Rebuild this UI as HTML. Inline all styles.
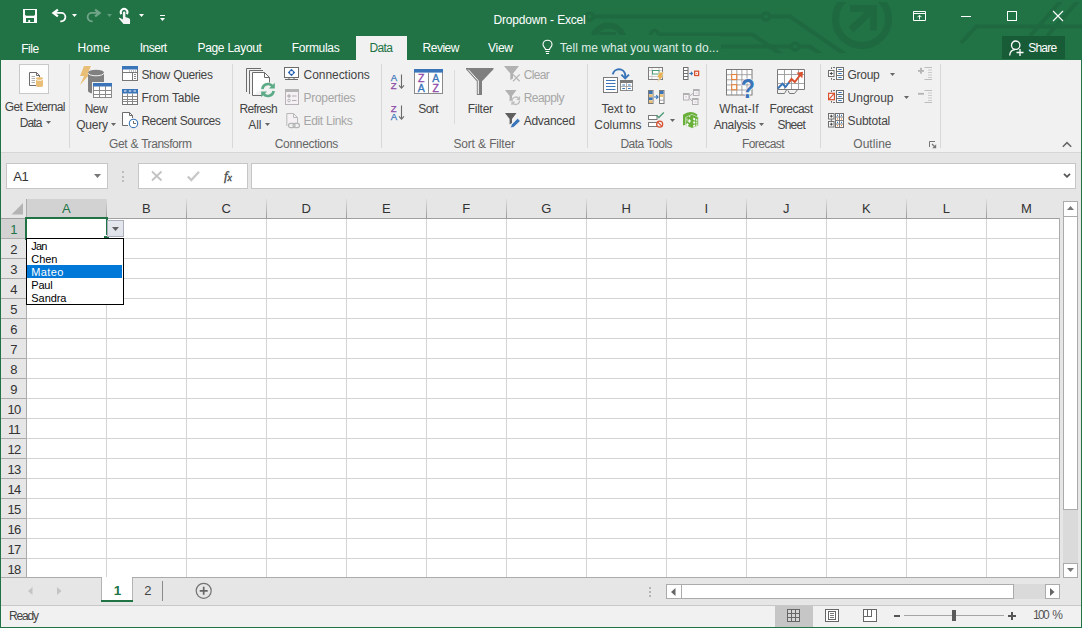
<!DOCTYPE html>
<html><head><meta charset="utf-8"><title>Dropdown - Excel</title>
<style>
*{box-sizing:border-box;margin:0;padding:0}
html,body{width:1082px;height:628px;overflow:hidden;background:#fff}
body{font-family:"Liberation Sans",sans-serif;font-size:12px;color:#444;position:relative}
.a,.t{position:absolute}
.t{white-space:nowrap}
svg{overflow:visible}
</style></head><body>
<div class="a" style="left:0px;top:0px;width:1082px;height:60px;background:#217346;"></div>
<svg class="a" style="left:0;top:2px;overflow:hidden" width="1082" height="51" viewBox="0 2 1082 51"><g fill="none" stroke="#1e693f" stroke-width="4">
<circle cx="589.5" cy="16.5" r="3.6" stroke-width="3.500"/><path d="M593.500 16.5H762"/><circle cx="766" cy="16.5" r="3.6" stroke-width="3.500"/><path d="M770 16.5H790L846 55"/>
<path d="M721 46.5H791"/><circle cx="795" cy="46.5" r="3.6" stroke-width="3.500"/><path d="M799 46.5H810L822 55"/>
<path d="M961 43L976.500 26.500H1082"/>
<path d="M1061 1L1030 36"/><path d="M1078 1L1047 36"/>
<circle cx="862" cy="19" r="26.500" stroke-width="7"/>
<path d="M850 8.500H873.500V30.500M873 9L851 30" stroke-width="7"/>
</g>
<g fill="none" stroke="#1e693f" stroke-width="4">
<path d="M658 34.500H752.500L783 55.500"/>
</g></svg>
<svg class="a" style="left:0;top:2px;overflow:hidden" width="1082" height="33" viewBox="0 2 1082 33"><g fill="none" stroke="#1e693f"><circle cx="654.5" cy="34" r="3.6" stroke-width="3.500"/>
<circle cx="608.400" cy="41" r="15.600" stroke-width="6"/><path d="M599 33.500H616" stroke-width="3"/></g></svg>
<div class="a" style="left:0px;top:60px;width:1px;height:568px;background:#217346;"></div>
<div class="a" style="left:1081px;top:60px;width:1px;height:568px;background:#217346;"></div>
<div class="a" style="left:0px;top:627px;width:1082px;height:1px;background:#217346;"></div>
<div class="t" style="left:493.60px;top:13px;font-size:12px;line-height:14px;letter-spacing:-0.200px;color:#fff;word-spacing:0.200px;">Dropdown - Excel</div>
<svg class="a" style="left:23px;top:9px" width="14" height="14" viewBox="0 0 14 14"><path fill-rule="evenodd" d="M0 0H14V14H0Z M2 1.100H12V5.700L11 6.700H3L2 5.700Z M3 9H11V12.900H3Z" fill="#fff"/><rect x="5.300" y="11" width="1.800" height="2" fill="#fff"/></svg>
<svg class="a" style="left:52px;top:8px" width="14" height="15" viewBox="0 0 14 15"><path d="M5.900 1.700L1.500 5L5.900 8.300" fill="none" stroke="#fff" stroke-width="2.300"/><path d="M2.500 4.900H9.200A4.200 4.200 0 0 1 9.200 13.300H8.300" fill="none" stroke="#fff" stroke-width="1.800"/></svg>
<svg class="a" style="left:72px;top:14px" width="5" height="3" viewBox="0 0 5 3"><path d="M0 0H5L2.500 3Z" fill="#fff"/></svg>
<svg class="a" style="left:87px;top:8px" width="14" height="15" viewBox="0 0 14 15"><g opacity=".36"><path d="M8.100 1.700L12.500 5L8.100 8.300" fill="none" stroke="#fff" stroke-width="2.300"/><path d="M11.500 4.900H4.800A4.200 4.200 0 0 0 4.800 13.300H5.700" fill="none" stroke="#fff" stroke-width="1.800"/></g></svg>
<svg class="a" style="left:107px;top:14px" width="5" height="3" viewBox="0 0 5 3"><path d="M0 0H5L2.500 3Z" fill="#5d9a79"/></svg>
<svg class="a" style="left:118px;top:7px" width="13" height="18" viewBox="0 0 13 18"><path d="M3.400 7.100A3.300 3.300 0 1 1 8.800 7.100" fill="none" stroke="#fff" stroke-width="2"/><path d="M4.900 5.700a1.250 1.250 0 0 1 2.500 0V10l3.600 1.300q1.200 .5 1.100 1.700L12 17H5.500L.9 11.500q-.2-.9 .8-.8L4.900 12.600Z" fill="#f4f4f4"/></svg>
<svg class="a" style="left:139px;top:14px" width="5" height="3" viewBox="0 0 5 3"><path d="M0 0H5L2.500 3Z" fill="#fff"/></svg>
<svg class="a" style="left:160px;top:15px" width="5" height="6" viewBox="0 0 5 6"><path d="M0 0.500H5" stroke="#fff" stroke-width="1"/><path d="M0 3H5L2.500 6Z" fill="#fff"/></svg>
<svg class="a" style="left:913px;top:11px" width="13" height="10" viewBox="0 0 13 10"><path d="M0.500 0.500H12.500V9.500H0.500Z M0.500 2.500H12.500" fill="none" stroke="#fff"/><path d="M6.500 8.500V4.500M4.500 6.200L6.500 4.200L8.500 6.200" fill="none" stroke="#fff"/></svg>
<div class="a" style="left:961px;top:16px;width:10px;height:1px;background:#fff;"></div>
<div class="a" style="left:1007px;top:11px;width:10px;height:10px;background:transparent;border:1px solid #fff"></div>
<svg class="a" style="left:1053px;top:11px" width="10" height="10" viewBox="0 0 10 10"><path d="M0 0L10 10M10 0L0 10" stroke="#fff" stroke-width="1.100"/></svg>
<div class="a" style="left:0px;top:36px;width:721px;height:24px;background:#217346;"></div>
<div class="a" style="left:356px;top:36px;width:51px;height:24px;background:#f1f1f1;"></div>
<div class="t" style="left:21.30px;top:42px;font-size:12px;line-height:14px;letter-spacing:-0.517px;color:#fff;">File</div>
<div class="t" style="left:77.40px;top:41px;font-size:12px;line-height:14px;letter-spacing:0.133px;color:#fff;">Home</div>
<div class="t" style="left:139.80px;top:41px;font-size:12px;line-height:14px;letter-spacing:-0.520px;color:#fff;">Insert</div>
<div class="t" style="left:197.50px;top:41px;font-size:12px;line-height:14px;letter-spacing:-0.333px;color:#fff;word-spacing:0.333px;">Page Layout</div>
<div class="t" style="left:291.80px;top:41px;font-size:12px;line-height:14px;letter-spacing:-0.300px;color:#fff;">Formulas</div>
<div class="t" style="left:422.50px;top:41px;font-size:12px;line-height:14px;letter-spacing:-0.480px;color:#fff;">Review</div>
<div class="t" style="left:488.00px;top:41px;font-size:12px;line-height:14px;letter-spacing:-0.283px;color:#fff;">View</div>
<div class="t" style="left:369.40px;top:41px;font-size:12px;line-height:14px;letter-spacing:-0.633px;color:#217346;">Data</div>
<div class="t" style="left:559.70px;top:41px;font-size:12px;line-height:14px;letter-spacing:0.043px;color:#dfece5;word-spacing:-0.043px;">Tell me what you want to do...</div>
<svg class="a" style="left:542px;top:40px" width="11" height="14" viewBox="0 0 11 14"><path d="M3.500 9.500C3.500 8 1 7 1 4.500a4.500 4.300 0 0 1 9 0C10 7 7.500 8 7.500 9.500Z" fill="none" stroke="#fff" stroke-width="1.100"/><path d="M3.500 11.500H7.500M4 13.500H7" stroke="#fff" stroke-width="1.100"/></svg>
<div class="a" style="left:1002px;top:36px;width:63px;height:23px;background:#185c37;"></div>
<div class="t" style="left:1028.30px;top:41px;font-size:12px;line-height:14px;letter-spacing:-0.800px;color:#fff;">Share</div>
<svg class="a" style="left:1009px;top:40px" width="15" height="16" viewBox="0 0 15 16"><circle cx="6.700" cy="5.200" r="4.200" fill="none" stroke="#fff" stroke-width="1.300"/><path d="M0.700 15.500C1 11.500 3.500 9.800 6 9.600" fill="none" stroke="#fff" stroke-width="1.300"/><path d="M7.500 12.500H14.500M11 9V16" stroke="#fff" stroke-width="1.300"/></svg>
<div class="a" style="left:1px;top:60px;width:1080px;height:92px;background:#f1f1f1;"></div>
<div class="a" style="left:1px;top:152px;width:1080px;height:1px;background:#d6d6d6;"></div>
<div class="a" style="left:1px;top:153px;width:1080px;height:46px;background:#e6e6e6;"></div>
<div class="a" style="left:69px;top:64px;width:1px;height:84px;background:#d8d8d8;"></div>
<div class="a" style="left:232px;top:64px;width:1px;height:84px;background:#d8d8d8;"></div>
<div class="a" style="left:381px;top:64px;width:1px;height:84px;background:#d8d8d8;"></div>
<div class="a" style="left:587px;top:64px;width:1px;height:84px;background:#d8d8d8;"></div>
<div class="a" style="left:706px;top:64px;width:1px;height:84px;background:#d8d8d8;"></div>
<div class="a" style="left:820px;top:64px;width:1px;height:84px;background:#d8d8d8;"></div>
<div class="a" style="left:940px;top:64px;width:1px;height:84px;background:#d8d8d8;"></div>
<div class="a" style="left:454px;top:70px;width:1px;height:54px;background:#dcdcdc;"></div>
<div class="t" style="left:109.10px;top:137px;font-size:12px;line-height:14px;letter-spacing:-0.437px;color:#666;word-spacing:0.437px;">Get &amp; Transform</div>
<div class="t" style="left:274.70px;top:137px;font-size:12px;line-height:14px;letter-spacing:-0.310px;color:#666;">Connections</div>
<div class="t" style="left:453.40px;top:137px;font-size:12px;line-height:14px;letter-spacing:-0.175px;color:#666;word-spacing:0.175px;">Sort &amp; Filter</div>
<div class="t" style="left:620.50px;top:137px;font-size:12px;line-height:14px;letter-spacing:-0.550px;color:#666;word-spacing:0.550px;">Data Tools</div>
<div class="t" style="left:742.00px;top:137px;font-size:12px;line-height:14px;letter-spacing:-0.586px;color:#666;">Forecast</div>
<div class="t" style="left:853.30px;top:137px;font-size:12px;line-height:14px;letter-spacing:0.033px;color:#666;">Outline</div>
<div class="t" style="left:4.70px;top:100px;font-size:12px;line-height:14px;letter-spacing:-0.590px;color:#444;word-spacing:0.590px;">Get External</div>
<div class="t" style="left:19.80px;top:116px;font-size:12px;line-height:14px;letter-spacing:-0.900px;color:#444;">Data</div>
<div class="t" style="left:84.70px;top:102px;font-size:12px;line-height:14px;letter-spacing:-0.525px;color:#444;">New</div>
<div class="t" style="left:76.20px;top:118px;font-size:12px;line-height:14px;letter-spacing:-0.225px;color:#444;">Query</div>
<div class="t" style="left:239.50px;top:102px;font-size:12px;line-height:14px;letter-spacing:-0.650px;color:#444;">Refresh</div>
<div class="t" style="left:248.30px;top:118px;font-size:12px;line-height:14px;letter-spacing:-0.075px;color:#444;">All</div>
<div class="t" style="left:418.20px;top:102px;font-size:12px;line-height:14px;letter-spacing:-0.533px;color:#444;">Sort</div>
<div class="t" style="left:467.80px;top:102px;font-size:12px;line-height:14px;letter-spacing:-0.290px;color:#444;">Filter</div>
<div class="t" style="left:601.60px;top:102px;font-size:12px;line-height:14px;letter-spacing:-0.270px;color:#444;word-spacing:0.270px;">Text to</div>
<div class="t" style="left:594.30px;top:118px;font-size:12px;line-height:14px;letter-spacing:-0.008px;color:#444;">Columns</div>
<div class="t" style="left:719.20px;top:102px;font-size:12px;line-height:14px;letter-spacing:0.125px;color:#444;">What-If</div>
<div class="t" style="left:713.70px;top:118px;font-size:12px;line-height:14px;letter-spacing:-0.371px;color:#444;">Analysis</div>
<div class="t" style="left:769.60px;top:102px;font-size:12px;line-height:14px;letter-spacing:-0.471px;color:#444;">Forecast</div>
<div class="t" style="left:777.50px;top:118px;font-size:12px;line-height:14px;letter-spacing:-0.787px;color:#444;">Sheet</div>
<div class="t" style="left:141.40px;top:68px;font-size:12px;line-height:14px;letter-spacing:-0.385px;color:#444;word-spacing:0.385px;">Show Queries</div>
<div class="t" style="left:141.40px;top:91px;font-size:12px;line-height:14px;letter-spacing:-0.150px;color:#444;word-spacing:0.150px;">From Table</div>
<div class="t" style="left:141.40px;top:114px;font-size:12px;line-height:14px;letter-spacing:-0.500px;color:#444;word-spacing:0.500px;">Recent Sources</div>
<div class="t" style="left:303.50px;top:68px;font-size:12px;line-height:14px;letter-spacing:-0.040px;color:#444;">Connections</div>
<div class="t" style="left:303.50px;top:91px;font-size:12px;line-height:14px;letter-spacing:-0.289px;color:#a6a6a6;">Properties</div>
<div class="t" style="left:303.50px;top:114px;font-size:12px;line-height:14px;letter-spacing:-0.356px;color:#a6a6a6;word-spacing:0.356px;">Edit Links</div>
<div class="t" style="left:523.70px;top:68px;font-size:12px;line-height:14px;letter-spacing:-0.625px;color:#a6a6a6;">Clear</div>
<div class="t" style="left:523.70px;top:91px;font-size:12px;line-height:14px;letter-spacing:-0.542px;color:#a6a6a6;">Reapply</div>
<div class="t" style="left:523.70px;top:114px;font-size:12px;line-height:14px;letter-spacing:-0.286px;color:#444;">Advanced</div>
<div class="t" style="left:847.60px;top:68px;font-size:12px;line-height:14px;letter-spacing:-0.312px;color:#444;">Group</div>
<div class="t" style="left:847.60px;top:91px;font-size:12px;line-height:14px;letter-spacing:-0.025px;color:#444;">Ungroup</div>
<div class="t" style="left:847.60px;top:114px;font-size:12px;line-height:14px;letter-spacing:-0.193px;color:#444;">Subtotal</div>
<svg class="a" style="left:46px;top:121px" width="5" height="3" viewBox="0 0 5 3"><path d="M0 0H5L2.500 3Z" fill="#666"/></svg>
<svg class="a" style="left:111px;top:123px" width="5" height="3" viewBox="0 0 5 3"><path d="M0 0H5L2.500 3Z" fill="#666"/></svg>
<svg class="a" style="left:265px;top:123px" width="5" height="3" viewBox="0 0 5 3"><path d="M0 0H5L2.500 3Z" fill="#666"/></svg>
<svg class="a" style="left:670px;top:119px" width="5" height="3" viewBox="0 0 5 3"><path d="M0 0H5L2.500 3Z" fill="#666"/></svg>
<svg class="a" style="left:759px;top:123px" width="5" height="3" viewBox="0 0 5 3"><path d="M0 0H5L2.500 3Z" fill="#666"/></svg>
<svg class="a" style="left:889.5px;top:73px" width="5" height="3" viewBox="0 0 5 3"><path d="M0 0H5L2.500 3Z" fill="#666"/></svg>
<svg class="a" style="left:903.5px;top:96px" width="5" height="3" viewBox="0 0 5 3"><path d="M0 0H5L2.500 3Z" fill="#666"/></svg>
<div class="a" style="left:19px;top:64px;width:30px;height:30px;background:#fdfdfd;border:1px solid #c8c8c8"></div>
<svg class="a" style="left:28px;top:71px" width="17" height="17" viewBox="0 0 17 17"><path d="M8 14.500H1.500V1.500H8.500L11.500 4.500V6" fill="#fff" stroke="#6b6b6b"/><path d="M8.500 1.500V4.500H11.500" fill="none" stroke="#6b6b6b"/>
<path d="M3.500 5.500H7M3.500 7.500H7M3.500 9.500H7M3.500 11.500H7" stroke="#b0b0b0"/>
<path d="M8 7.500a3.500 1.500 0 0 1 7 0V14.500a3.500 1.500 0 0 1-7 0Z" fill="#e9bf78"/><path d="M8 8a3.500 1.400 0 0 0 7 0" fill="none" stroke="#fdfdfd" stroke-width=".9"/></svg>
<svg class="a" style="left:79px;top:65px" width="34" height="34" viewBox="0 0 34 34"><path d="M5 1H12L8.800 8.500H11.500L1 20L5 11H1Z" fill="#e9bf78"/>
<path d="M9 7.500a8 2.800 0 0 1 16 0V26a8 2.800 0 0 1-16 0Z" fill="#808080"/><path d="M9 8a8 2.800 0 0 0 16 0" fill="none" stroke="#f1f1f1" stroke-width="1"/>
<rect x="13.500" y="17.500" width="20" height="16" fill="#fff" stroke="#f1f1f1"/>
<rect x="14.500" y="18.500" width="18" height="14" fill="#fff" stroke="#8a8a8a"/><rect x="14" y="18" width="19" height="3.500" fill="#3b75b9"/>
<path d="M20.500 21V32M26.500 21V32M15 25.500H32M15 29.500H32" stroke="#8a8a8a"/></svg>
<svg class="a" style="left:122px;top:66px" width="16" height="15" viewBox="0 0 16 15"><rect x=".5" y=".5" width="15" height="14" fill="#fff" stroke="#777"/><rect x="0" y="0" width="16" height="3.500" fill="#3b75b9"/>
<path d="M1 6.500H15M10.500 7V14" stroke="#777"/><path d="M7 5H8M9 5H10M11 5H12M13 5H14" stroke="#888"/><path d="M12 8.500H14M12 10.500H14M12 12.500H14" stroke="#888"/></svg>
<svg class="a" style="left:122px;top:89px" width="16" height="16" viewBox="0 0 16 16"><rect x=".5" y=".5" width="15" height="15" fill="#fff" stroke="#777"/><rect x="0" y="0" width="16" height="4.500" fill="#3b75b9"/>
<path d="M2 2H4.500M6.800 2H9.300M11.500 2H14" stroke="#fff"/><path d="M5.500 4.500V15M10.500 4.500V15M1 7.500H15M1 10.500H15M1 12.500H15" stroke="#8a8a8a"/></svg>
<svg class="a" style="left:122px;top:112px" width="17" height="17" viewBox="0 0 17 17"><path d="M6 13.500H.5V.5H7.500L10.500 3.500V6" fill="#fff" stroke="#6b6b6b"/><path d="M7.500 .5V3.500H10.500" fill="none" stroke="#6b6b6b"/>
<circle cx="11.500" cy="11.400" r="4.200" fill="#fff" stroke="#3b75b9" stroke-width="1.100"/><path d="M11.500 9V11.500H14" fill="none" stroke="#6b6b6b"/></svg>
<svg class="a" style="left:246px;top:68px" width="30" height="30" viewBox="0 0 30 30"><path d="M.5 24V.5H15" fill="none" stroke="#6b6b6b"/><path d="M3.500 26V2.500H17" fill="none" stroke="#6b6b6b"/>
<path d="M6.500 27.500V4.500H18.500L23.500 9.500V16" fill="#fff" stroke="#6b6b6b"/><path d="M18.500 4.500V9.500H23.500" fill="none" stroke="#6b6b6b"/><path d="M6.500 27.500H16" stroke="#6b6b6b"/>
<circle cx="22" cy="22" r="7.800" fill="#f1f1f1"/>
<path d="M16.300 21A5.800 5.800 0 0 1 26.500 18.200" fill="none" stroke="#5aab86" stroke-width="2.600"/><path d="M28.800 14.800V20.500H23Z" fill="#5aab86"/>
<path d="M27.700 23A5.800 5.800 0 0 1 17.500 25.800" fill="none" stroke="#5aab86" stroke-width="2.600"/><path d="M15.200 29.200V23.500H21Z" fill="#5aab86"/></svg>
<svg class="a" style="left:284px;top:67px" width="15" height="13" viewBox="0 0 15 13"><rect x=".5" y=".5" width="14" height="10" fill="#fff" stroke="#6b6b6b"/><path d="M1 12.500H14M5 11V12.500M10 11V12.500" stroke="#6b6b6b"/>
<path d="M7.500 1.800L11.200 5.500L7.500 9.200L3.800 5.500Z" fill="#2b65b5"/><rect x="6.200" y="4.200" width="2.600" height="2.600" fill="#fff"/></svg>
<svg class="a" style="left:285px;top:89px" width="14" height="16" viewBox="0 0 14 16"><rect x=".5" y=".5" width="13" height="15" fill="#f4f0f4" stroke="#b9b3b9"/><rect x="0" y="0" width="14" height="3" fill="#b4b4b4"/>
<circle cx="4" cy="7" r="1.300" fill="#c8c8c8" stroke="#aaa" stroke-width=".8"/><circle cx="4" cy="11.500" r="1.300" fill="#f4f0f4" stroke="#aaa" stroke-width=".8"/><path d="M7 7H11.500M7 11.500H11.500" stroke="#b0b0b0"/></svg>
<svg class="a" style="left:286px;top:113px" width="14" height="16" viewBox="0 0 14 16"><path d="M.8 13V.5H7.500L11.500 4.500V10" fill="#f4f0f4" stroke="#b9b9b9"/><path d="M7.500 .5V4.500H11.500" fill="none" stroke="#b9b9b9"/>
<rect x="2.500" y="10.300" width="6.500" height="4.400" rx="2.200" fill="#f1f1f1" stroke="#b4b4b4" stroke-width="1.200"/><rect x="7" y="10.300" width="6.500" height="4.400" rx="2.200" fill="none" stroke="#b4b4b4" stroke-width="1.200"/></svg>
<svg class="a" style="left:390px;top:73px" width="16" height="17" viewBox="0 0 16 17"><text x="4" y="8" font-family="Liberation Sans, sans-serif" font-size="9.6" fill="#3b75b9" stroke="#3b75b9" stroke-width="0.25" text-anchor="middle">A</text><text x="3.8" y="15.8" font-family="Liberation Sans, sans-serif" font-size="9.6" fill="#8d49a8" stroke="#8d49a8" stroke-width="0.25" text-anchor="middle">Z</text><path d="M11.500 1.500V15M9 12.400L11.500 15.200L14 12.400" fill="none" stroke="#6b6b6b" stroke-width="1.100"/></svg>
<svg class="a" style="left:390px;top:104px" width="16" height="17" viewBox="0 0 16 17"><text x="3.8" y="8" font-family="Liberation Sans, sans-serif" font-size="9.6" fill="#8d49a8" stroke="#8d49a8" stroke-width="0.25" text-anchor="middle">Z</text><text x="4" y="16" font-family="Liberation Sans, sans-serif" font-size="9.6" fill="#3b75b9" stroke="#3b75b9" stroke-width="0.25" text-anchor="middle">A</text><path d="M11.500 1.500V15M9 12.400L11.500 15.200L14 12.400" fill="none" stroke="#6b6b6b" stroke-width="1.100"/></svg>
<svg class="a" style="left:414px;top:69px" width="29" height="25" viewBox="0 0 29 25"><rect x=".5" y=".5" width="28" height="24" fill="#fff" stroke="#8a8a8a"/><rect x="0" y="0" width="29" height="3.600" fill="#3b75b9"/><path d="M14.500 3.500V24" stroke="#8a8a8a"/><text x="7.3" y="12.6" font-family="Liberation Sans, sans-serif" font-size="10.5" fill="#8d49a8" stroke="#8d49a8" stroke-width="0.35" text-anchor="middle">Z</text><text x="7.3" y="22.8" font-family="Liberation Sans, sans-serif" font-size="10.5" fill="#3b75b9" stroke="#3b75b9" stroke-width="0.35" text-anchor="middle">A</text><text x="21.7" y="12.6" font-family="Liberation Sans, sans-serif" font-size="10.5" fill="#3b75b9" stroke="#3b75b9" stroke-width="0.35" text-anchor="middle">A</text><text x="21.7" y="22.8" font-family="Liberation Sans, sans-serif" font-size="10.5" fill="#8d49a8" stroke="#8d49a8" stroke-width="0.35" text-anchor="middle">Z</text></svg>
<svg class="a" style="left:466px;top:68px" width="28" height="27" viewBox="0 0 28 27"><path d="M0 0H27.500V1.200L16 13.200V27H10.800V13.200L0 1.200Z" fill="#7f7f7f"/><path d="M2.300 1.600L12.300 12.700V26" fill="none" stroke="#fff" stroke-width="1"/></svg>
<svg class="a" style="left:504px;top:66px" width="17" height="16" viewBox="0 0 17 16"><path d="M0 0H15L9 7.500V12.500L6.300 14V7.500Z" fill="#b1b1b1"/><path d="M9 8.500L15.700 15.300M15.700 8.500L9 15.300" stroke="#b9b9b9" stroke-width="1.300"/></svg>
<svg class="a" style="left:505px;top:90px" width="16" height="16" viewBox="0 0 16 16"><path d="M0 0H11.500L7 6V10L4.600 11.500V6Z" fill="#b1b1b1"/><path d="M7 11A3.800 3.800 0 0 1 13.800 8.500M14.500 6.500V9.300H11.700M14.500 10.500A3.800 3.800 0 0 1 7.700 13M7 15V12.200H9.800" fill="none" stroke="#bdbdbd" stroke-width="1.300"/></svg>
<svg class="a" style="left:505px;top:113px" width="16" height="16" viewBox="0 0 16 16"><path d="M0 0H11.500L7 6V10L4.600 11.500V6Z" fill="#5f5f5f"/><path d="M5.300 15.100L6.300 11.700L12.600 5.200L15.400 8L8.800 14.200Z" fill="#3b75b9" stroke="#f1f1f1" stroke-width=".8"/></svg>
<svg class="a" style="left:603px;top:67px" width="31" height="27" viewBox="0 0 31 27"><rect x=".5" y="10.500" width="14" height="15" fill="#fff" stroke="#7a7a7a"/><path d="M3 13.500H12.500M3 16.500H12.500M3 19.500H12.500M3 22.500H12.500" stroke="#3b75b9"/>
<rect x="17.500" y="13.500" width="12" height="10" fill="#fff" stroke="#8a8a8a"/><rect x="17" y="13" width="13" height="3" fill="#7a7a7a"/><path d="M23.500 16V23M18 19.500H29" stroke="#9a9a9a" stroke-width=".8"/>
<path d="M19.300 18H22M25 18H27.700M19.300 21.500H22M25 21.500H27.700" stroke="#3b75b9"/>
<path d="M9.800 7.400A6.300 6.300 0 0 1 22.200 7.400V10.500" fill="none" stroke="#3b75b9" stroke-width="2"/><path d="M18.400 7.600L22.200 11.400L26 7.600" fill="none" stroke="#3b75b9" stroke-width="2"/></svg>
<svg class="a" style="left:648px;top:67px" width="17" height="16" viewBox="0 0 17 16"><rect x=".5" y=".5" width="14" height="12" fill="#fafafa" stroke="#7c7c7c"/><path d="M1 3.500H14M1 9.500H14M4 1V12M11 1V12" stroke="#c4c4c4" stroke-width=".8"/>
<rect x="4.500" y="3.500" width="6.500" height="3.500" fill="#fff" stroke="#4f9d78"/><path d="M11.300 5.300H16L13.800 8.800H15.800L9.300 15.200L11.200 10.600H9Z" fill="#e8b04e" stroke="#f1f1f1" stroke-width=".5"/></svg>
<svg class="a" style="left:648px;top:90px" width="17" height="14" viewBox="0 0 17 14"><rect x=".5" y=".5" width="4.500" height="13" fill="#fff" stroke="#7a7a7a"/><rect x="1" y="1" width="3.500" height="3" fill="#3b75b9"/><rect x="1" y="4.200" width="3.500" height="2.800" fill="#e9bf78"/><rect x="1" y="7.300" width="3.500" height="2.800" fill="#3b75b9"/><rect x="1" y="10.300" width="3.500" height="2.700" fill="#e9bf78"/>
<path d="M6 7H10M8.300 5.200L10 7L8.300 8.800" fill="none" stroke="#3b75b9" stroke-width="1.100"/>
<rect x="11.500" y=".5" width="4.500" height="13" fill="#fff" stroke="#7a7a7a"/><rect x="12" y="1" width="3.500" height="3" fill="#3b75b9"/><rect x="12" y="4.200" width="3.500" height="2.800" fill="#e9bf78"/><path d="M12 10.200H15.500" stroke="#8a8a8a" stroke-width=".8"/></svg>
<svg class="a" style="left:648px;top:112px" width="17" height="16" viewBox="0 0 17 16"><rect x=".5" y="3.500" width="8.500" height="4" fill="#fff" stroke="#7a7a7a"/><rect x=".5" y="10.500" width="8.500" height="4" fill="#fff" stroke="#7a7a7a"/>
<path d="M8.500 3.300L10.800 5.600L15.800 .5" fill="none" stroke="#4f9d78" stroke-width="1.400"/><circle cx="11.700" cy="12.200" r="3" fill="#f1f1f1" stroke="#d9502e" stroke-width="1.200"/><path d="M9.700 10.200L13.700 14.200" stroke="#d9502e" stroke-width="1.200"/></svg>
<svg class="a" style="left:683px;top:67px" width="17" height="13" viewBox="0 0 17 13"><rect x=".5" y=".5" width="4.500" height="12" fill="#fff" stroke="#6f6f6f"/><path d="M1 3.500H5M1 6.500H5M1 9.500H5" stroke="#6f6f6f"/>
<path d="M6.300 6.500H9.500M7.900 4.900L9.500 6.500L7.900 8.100" fill="none" stroke="#3b75b9" stroke-width="1.100"/><rect x="11.700" y="4.200" width="3.900" height="4.300" fill="#fff" stroke="#d9502e" stroke-width="1.300"/><rect x="13.200" y="5.900" width=".9" height=".9" fill="#d9502e"/></svg>
<svg class="a" style="left:683px;top:89px" width="17" height="16" viewBox="0 0 17 16"><g fill="#f6f2f6" stroke="#b5b0b5"><path d="M5.500 8L10.500 4M5.500 8L9.500 12.500" fill="none"/><rect x=".5" y="4.500" width="5.500" height="6.500"/><rect x="10.500" y=".5" width="5.500" height="6"/><rect x="9.500" y="9.500" width="5.500" height="6"/></g>
<path d="M0 5.200H6.500M10 1.200H16.500M9 10.200H15.500" stroke="#b0b0b0" stroke-width="1.400"/><path d="M2 8H4M12.500 4H14.500M11.500 13H13.500" stroke="#c0c0c0" stroke-width=".8"/></svg>
<svg class="a" style="left:682px;top:111px" width="18" height="18" viewBox="0 0 18 18"><path d="M1 3.800Q8-1.300 15.200 3.300V7.500L10 3.500L3.600 6.500V13.800L1 14.500Z" fill="#68b03a"/>
<path d="M10 3.300L16.300 6.300V14.500L10 17.300L3.800 14.500V6.300Z" fill="#68b03a" stroke="#f1f1f1" stroke-width=".5"/>
<path d="M11.300 6.600L13.200 7.400V9.600L11.300 9ZM14.300 7.800L15.300 8.200V10.200L14.300 9.900ZM11.300 10.500H13.200V12.500H11.300ZM14.300 10.800H15.300V12.500H14.300ZM11.300 14L13.200 13.500V15.300L11.300 16ZM14.300 13.300L15.300 13V14.600L14.300 15Z" fill="#fff"/>
<path d="M7.300 8.300V11.700M5.600 10H9M5.400 12.200V15.200M3.900 13.700H6.900" stroke="#fff" stroke-width="1.100"/><path d="M5 7.500V9.500M7 5.800L8.300 5.200" stroke="#e4f2d8" stroke-width=".9"/></svg>
<svg class="a" style="left:726px;top:69px" width="30" height="30" viewBox="0 0 30 30"><rect x=".5" y=".5" width="25.500" height="25.500" fill="#fff" stroke="#7a7a7a"/><path d="M5.700 1V26M10.800 1V26M15.900 1V26M21 1V26M1 5.700H26M1 10.800H26M1 15.900H26M1 21H26" stroke="#9a9a9a" stroke-width=".9"/>
<rect x="5.700" y="5.500" width="5" height="5" fill="#fff" stroke="#e8813a" stroke-width="1.100"/><rect x="5.700" y="15.700" width="5" height="5" fill="#fff" stroke="#e8813a" stroke-width="1.100"/>
<text x="21.800" y="28.600" font-family="Liberation Sans, sans-serif" font-size="27" font-weight="bold" fill="#3b75b9" stroke="#f1f1f1" stroke-width="1.600" paint-order="stroke" text-anchor="middle" transform="translate(21.800 0) scale(.86 1) translate(-21.800 0)">?</text></svg>
<svg class="a" style="left:777px;top:69px" width="29" height="26" viewBox="0 0 29 26"><path d="M.5 .5H27.500V20.500H.5Z" fill="#fff" stroke="#7a7a7a"/><path d="M.5 20.500V24.500H7.500L9.500 21M11 21.500L12.500 24.500H17.500L20.500 20.800" fill="none" stroke="#7a7a7a"/>
<path d="M7.500 1V20M14.500 1V20M21.500 1V20M1 5.500H27M1 14.500H27" stroke="#9a9a9a" stroke-width=".9"/>
<path d="M.8 19.500L5.500 14.800L8.500 18L12.300 13" fill="none" stroke="#3b75b9" stroke-width="2"/><path d="M12 13.300L14.500 10L17.800 13L23.500 5.500" fill="none" stroke="#d9502e" stroke-width="2"/><path d="M19.500 3.800L26 2.700L25.300 9.200Z" fill="#d9502e"/></svg>
<svg class="a" style="left:828px;top:67px" width="17" height="13" viewBox="0 0 17 13"><path d="M7 .5H3.500V3M7 12.500H3.500V10" fill="none" stroke="#6f6f6f" stroke-dasharray="2 1"/><rect x=".5" y="3.500" width="5.500" height="6" fill="#fff" stroke="#6f6f6f"/><path d="M1.800 6.500H4.800M3.300 5V8" stroke="#444"/><rect x="8.500" y=".5" width="7" height="12" fill="#fff" stroke="#6f6f6f"/><path d="M8.500 4.500H15.500M8.500 8.500H15.500" stroke="#6f6f6f"/><path d="M10.300 2.500H13.700M10.300 6.500H13.700M10.300 10.500H13.700" stroke="#3b75b9"/></svg>
<svg class="a" style="left:828px;top:90px" width="17" height="13" viewBox="0 0 17 13"><path d="M7 .5H3.500V3M7 12.500H3.500V10" fill="none" stroke="#6f6f6f" stroke-dasharray="2 1"/><rect x=".6" y="3.300" width="5.800" height="6.400" fill="#fff" stroke="#d9502e" stroke-width="1.200"/><path d="M1 9.300L6 3.700" stroke="#d9502e" stroke-width="1.100"/><rect x="8.500" y=".5" width="7" height="12" fill="#fff" stroke="#6f6f6f"/><path d="M8.500 4.500H15.500M8.500 8.500H15.500" stroke="#6f6f6f"/><path d="M10.300 2.500H13.700M10.300 6.500H13.700M10.300 10.500H13.700" stroke="#3b75b9"/></svg>
<svg class="a" style="left:828px;top:113px" width="17" height="15" viewBox="0 0 17 15"><rect x=".5" y=".5" width="5.500" height="5.500" fill="#fff" stroke="#6f6f6f"/><rect x=".5" y="8.500" width="5.500" height="5.500" fill="#fff" stroke="#6f6f6f"/><path d="M1.800 3.200H4.800M3.300 1.700V4.700M1.800 11.200H4.800M3.300 9.700V12.700" stroke="#444"/><path d="M3.300 6V8.500" stroke="#6f6f6f"/>
<rect x="7.500" y=".5" width="8" height="14" fill="#fff" stroke="#6f6f6f"/><path d="M11.500 .5V14M7.500 4H15.500M7.500 7.500H15.500M7.500 11H15.500" stroke="#6f6f6f" stroke-width=".9"/>
<path d="M9 2.300H10M9 9.300H10" stroke="#3b75b9" stroke-width="1.200"/><path d="M9 5.800H10M13 5.800H14M9 12.700H10M13 12.700H14" stroke="#e8813a" stroke-width="1.200"/><path d="M13 2.300H14M13 9.300H14" stroke="#3b75b9" stroke-width="1.200"/></svg>
<svg class="a" style="left:918px;top:67px" width="14" height="13" viewBox="0 0 14 13"><path d="M0 3.800H6M3 .8V6.800" stroke="#b3b3b3" stroke-width="1.800"/><path d="M6.500 .5H14M6.500 12.500H14" stroke="#bdbdbd"/><path d="M10 3H14M10 5.500H14M10 8H14M10 10.500H14" stroke="#c6c6c6" stroke-width=".9"/></svg>
<svg class="a" style="left:918px;top:90px" width="14" height="13" viewBox="0 0 14 13"><path d="M0 3.800H6" stroke="#b3b3b3" stroke-width="1.800"/><path d="M6.500 .5H14M6.500 12.500H14" stroke="#bdbdbd"/><path d="M10 3H14M10 5.500H14M10 8H14M10 10.500H14" stroke="#c6c6c6" stroke-width=".9"/></svg>
<svg class="a" style="left:929px;top:141px" width="8" height="8" viewBox="0 0 8 8"><path d="M.5 6V.5H6" fill="none" stroke="#777"/><path d="M3 3L6 6" stroke="#777" stroke-width="1.200"/><path d="M7.200 3.200V7.200H3.200Z" fill="#777"/></svg>
<svg class="a" style="left:1062px;top:141px" width="10" height="7" viewBox="0 0 10 7"><path d="M.8 5.800L5 1.600L9.200 5.800" fill="none" stroke="#666" stroke-width="1.500"/></svg>
<div class="a" style="left:6px;top:163px;width:102px;height:26px;background:#fff;border:1px solid #c6c6c6"></div>
<div class="t" style="left:13.20px;top:169px;font-size:13px;line-height:15px;letter-spacing:-0.300px;color:#333;">A1</div>
<svg class="a" style="left:94px;top:174px" width="7" height="4" viewBox="0 0 7 4"><path d="M0 0H7L3.500 4Z" fill="#777"/></svg>
<div class="a" style="left:122px;top:171px;width:2px;height:2px;background:#bdbdbd;"></div>
<div class="a" style="left:122px;top:176px;width:2px;height:2px;background:#bdbdbd;"></div>
<div class="a" style="left:122px;top:180px;width:2px;height:2px;background:#bdbdbd;"></div>
<div class="a" style="left:138px;top:163px;width:110px;height:26px;background:#fff;border:1px solid #c6c6c6"></div>
<svg class="a" style="left:151px;top:171px" width="12" height="10" viewBox="0 0 12 10"><path d="M1 .5L10.500 9.500M10.500 .5L1 9.500" stroke="#c2c2c2" stroke-width="1.800"/></svg>
<svg class="a" style="left:187px;top:171px" width="13" height="10" viewBox="0 0 13 10"><path d="M.8 5.500L4.300 9L12 .8" fill="none" stroke="#c8c8c8" stroke-width="2.300"/></svg>
<div class="t" style="left:224px;top:168px;font-family:'Liberation Serif',serif;font-style:italic;font-size:13px;line-height:16px;color:#4a4a4a;letter-spacing:.3px;-webkit-text-stroke:.35px #4a4a4a">f<span style="font-size:10px;position:relative;top:1px;left:-.5px">x</span></div>
<div class="a" style="left:251px;top:163px;width:825px;height:26px;background:#fff;border:1px solid #c6c6c6"></div>
<svg class="a" style="left:1063px;top:173px" width="8" height="5" viewBox="0 0 8 5"><path d="M1 .8L4 3.800L7 .8" fill="none" stroke="#555" stroke-width="1.800"/></svg>
<div class="a" style="left:1px;top:199px;width:1080px;height:19px;background:#e6e6e6;"></div>
<div class="a" style="left:27px;top:199px;width:80px;height:19px;background:#d2d2d2;"></div>
<div class="a" style="left:1px;top:218px;width:26px;height:360px;background:#e6e6e6;"></div>
<div class="a" style="left:1060px;top:199px;width:21px;height:379px;background:#e6e6e6;"></div>
<div class="a" style="left:26px;top:218px;width:1034px;height:360px;background:#fff;"></div>
<div class="a" style="left:106px;top:218px;width:1px;height:360px;background:#d4d4d4;"></div>
<div class="a" style="left:186px;top:218px;width:1px;height:360px;background:#d4d4d4;"></div>
<div class="a" style="left:266px;top:218px;width:1px;height:360px;background:#d4d4d4;"></div>
<div class="a" style="left:346px;top:218px;width:1px;height:360px;background:#d4d4d4;"></div>
<div class="a" style="left:426px;top:218px;width:1px;height:360px;background:#d4d4d4;"></div>
<div class="a" style="left:506px;top:218px;width:1px;height:360px;background:#d4d4d4;"></div>
<div class="a" style="left:586px;top:218px;width:1px;height:360px;background:#d4d4d4;"></div>
<div class="a" style="left:666px;top:218px;width:1px;height:360px;background:#d4d4d4;"></div>
<div class="a" style="left:746px;top:218px;width:1px;height:360px;background:#d4d4d4;"></div>
<div class="a" style="left:826px;top:218px;width:1px;height:360px;background:#d4d4d4;"></div>
<div class="a" style="left:906px;top:218px;width:1px;height:360px;background:#d4d4d4;"></div>
<div class="a" style="left:986px;top:218px;width:1px;height:360px;background:#d4d4d4;"></div>
<div class="a" style="left:26px;top:238px;width:1034px;height:1px;background:#d4d4d4;"></div>
<div class="a" style="left:26px;top:258px;width:1034px;height:1px;background:#d4d4d4;"></div>
<div class="a" style="left:26px;top:278px;width:1034px;height:1px;background:#d4d4d4;"></div>
<div class="a" style="left:26px;top:298px;width:1034px;height:1px;background:#d4d4d4;"></div>
<div class="a" style="left:26px;top:318px;width:1034px;height:1px;background:#d4d4d4;"></div>
<div class="a" style="left:26px;top:338px;width:1034px;height:1px;background:#d4d4d4;"></div>
<div class="a" style="left:26px;top:358px;width:1034px;height:1px;background:#d4d4d4;"></div>
<div class="a" style="left:26px;top:378px;width:1034px;height:1px;background:#d4d4d4;"></div>
<div class="a" style="left:26px;top:398px;width:1034px;height:1px;background:#d4d4d4;"></div>
<div class="a" style="left:26px;top:418px;width:1034px;height:1px;background:#d4d4d4;"></div>
<div class="a" style="left:26px;top:438px;width:1034px;height:1px;background:#d4d4d4;"></div>
<div class="a" style="left:26px;top:458px;width:1034px;height:1px;background:#d4d4d4;"></div>
<div class="a" style="left:26px;top:478px;width:1034px;height:1px;background:#d4d4d4;"></div>
<div class="a" style="left:26px;top:498px;width:1034px;height:1px;background:#d4d4d4;"></div>
<div class="a" style="left:26px;top:518px;width:1034px;height:1px;background:#d4d4d4;"></div>
<div class="a" style="left:26px;top:538px;width:1034px;height:1px;background:#d4d4d4;"></div>
<div class="a" style="left:26px;top:558px;width:1034px;height:1px;background:#d4d4d4;"></div>
<div class="a" style="left:106px;top:199px;width:1px;height:19px;background:#ababab;background:linear-gradient(#dcdcdc,#bdbdbd 50%,#999)"></div>
<div class="a" style="left:186px;top:199px;width:1px;height:19px;background:#ababab;background:linear-gradient(#dcdcdc,#bdbdbd 50%,#999)"></div>
<div class="a" style="left:266px;top:199px;width:1px;height:19px;background:#ababab;background:linear-gradient(#dcdcdc,#bdbdbd 50%,#999)"></div>
<div class="a" style="left:346px;top:199px;width:1px;height:19px;background:#ababab;background:linear-gradient(#dcdcdc,#bdbdbd 50%,#999)"></div>
<div class="a" style="left:426px;top:199px;width:1px;height:19px;background:#ababab;background:linear-gradient(#dcdcdc,#bdbdbd 50%,#999)"></div>
<div class="a" style="left:506px;top:199px;width:1px;height:19px;background:#ababab;background:linear-gradient(#dcdcdc,#bdbdbd 50%,#999)"></div>
<div class="a" style="left:586px;top:199px;width:1px;height:19px;background:#ababab;background:linear-gradient(#dcdcdc,#bdbdbd 50%,#999)"></div>
<div class="a" style="left:666px;top:199px;width:1px;height:19px;background:#ababab;background:linear-gradient(#dcdcdc,#bdbdbd 50%,#999)"></div>
<div class="a" style="left:746px;top:199px;width:1px;height:19px;background:#ababab;background:linear-gradient(#dcdcdc,#bdbdbd 50%,#999)"></div>
<div class="a" style="left:826px;top:199px;width:1px;height:19px;background:#ababab;background:linear-gradient(#dcdcdc,#bdbdbd 50%,#999)"></div>
<div class="a" style="left:906px;top:199px;width:1px;height:19px;background:#ababab;background:linear-gradient(#dcdcdc,#bdbdbd 50%,#999)"></div>
<div class="a" style="left:986px;top:199px;width:1px;height:19px;background:#ababab;background:linear-gradient(#dcdcdc,#bdbdbd 50%,#999)"></div>
<div class="a" style="left:26px;top:199px;width:1px;height:379px;background:#ababab;"></div>
<div class="a" style="left:1px;top:218px;width:1059px;height:1px;background:#a0a0a0;"></div>
<div class="a" style="left:1059px;top:218px;width:1px;height:360px;background:#ababab;"></div>
<div class="a" style="left:1px;top:577px;width:1059px;height:1px;background:#ababab;"></div>
<div class="a" style="left:1px;top:219px;width:25px;height:19px;background:#d2d2d2;"></div>
<div class="a" style="left:1px;top:238px;width:25px;height:1px;background:#ababab;"></div>
<div class="a" style="left:1px;top:258px;width:25px;height:1px;background:#ababab;"></div>
<div class="a" style="left:1px;top:278px;width:25px;height:1px;background:#ababab;"></div>
<div class="a" style="left:1px;top:298px;width:25px;height:1px;background:#ababab;"></div>
<div class="a" style="left:1px;top:318px;width:25px;height:1px;background:#ababab;"></div>
<div class="a" style="left:1px;top:338px;width:25px;height:1px;background:#ababab;"></div>
<div class="a" style="left:1px;top:358px;width:25px;height:1px;background:#ababab;"></div>
<div class="a" style="left:1px;top:378px;width:25px;height:1px;background:#ababab;"></div>
<div class="a" style="left:1px;top:398px;width:25px;height:1px;background:#ababab;"></div>
<div class="a" style="left:1px;top:418px;width:25px;height:1px;background:#ababab;"></div>
<div class="a" style="left:1px;top:438px;width:25px;height:1px;background:#ababab;"></div>
<div class="a" style="left:1px;top:458px;width:25px;height:1px;background:#ababab;"></div>
<div class="a" style="left:1px;top:478px;width:25px;height:1px;background:#ababab;"></div>
<div class="a" style="left:1px;top:498px;width:25px;height:1px;background:#ababab;"></div>
<div class="a" style="left:1px;top:518px;width:25px;height:1px;background:#ababab;"></div>
<div class="a" style="left:1px;top:538px;width:25px;height:1px;background:#ababab;"></div>
<div class="a" style="left:1px;top:558px;width:25px;height:1px;background:#ababab;"></div>
<svg class="a" style="left:11px;top:203px" width="12" height="12" viewBox="0 0 12 12"><path d="M12 0V11.500H.5Z" fill="#b4b4b4"/></svg>
<div class="t" style="left:61.97px;top:201px;font-size:13px;line-height:15px;letter-spacing:0.000px;color:#217346;">A</div>
<div class="t" style="left:141.98px;top:201px;font-size:13px;line-height:15px;letter-spacing:0.000px;color:#333;">B</div>
<div class="t" style="left:221.60px;top:201px;font-size:13px;line-height:15px;letter-spacing:0.000px;color:#333;">C</div>
<div class="t" style="left:301.60px;top:201px;font-size:13px;line-height:15px;letter-spacing:0.000px;color:#333;">D</div>
<div class="t" style="left:381.98px;top:201px;font-size:13px;line-height:15px;letter-spacing:0.000px;color:#333;">E</div>
<div class="t" style="left:462.32px;top:201px;font-size:13px;line-height:15px;letter-spacing:0.000px;color:#333;">F</div>
<div class="t" style="left:541.25px;top:201px;font-size:13px;line-height:15px;letter-spacing:0.000px;color:#333;">G</div>
<div class="t" style="left:621.60px;top:201px;font-size:13px;line-height:15px;letter-spacing:0.000px;color:#333;">H</div>
<div class="t" style="left:704.50px;top:201px;font-size:13px;line-height:15px;letter-spacing:0.000px;color:#333;">I</div>
<div class="t" style="left:783.05px;top:201px;font-size:13px;line-height:15px;letter-spacing:0.000px;color:#333;">J</div>
<div class="t" style="left:861.97px;top:201px;font-size:13px;line-height:15px;letter-spacing:0.000px;color:#333;">K</div>
<div class="t" style="left:942.67px;top:201px;font-size:13px;line-height:15px;letter-spacing:0.000px;color:#333;">L</div>
<div class="t" style="left:1020.88px;top:201px;font-size:13px;line-height:15px;letter-spacing:0.000px;color:#333;">M</div>
<div class="t" style="left:10.18px;top:222px;font-size:13px;line-height:15px;letter-spacing:0.000px;color:#217346;">1</div>
<div class="t" style="left:10.18px;top:242px;font-size:13px;line-height:15px;letter-spacing:0.000px;color:#333;">2</div>
<div class="t" style="left:10.18px;top:262px;font-size:13px;line-height:15px;letter-spacing:0.000px;color:#333;">3</div>
<div class="t" style="left:10.18px;top:282px;font-size:13px;line-height:15px;letter-spacing:0.000px;color:#333;">4</div>
<div class="t" style="left:10.18px;top:302px;font-size:13px;line-height:15px;letter-spacing:0.000px;color:#333;">5</div>
<div class="t" style="left:10.18px;top:322px;font-size:13px;line-height:15px;letter-spacing:0.000px;color:#333;">6</div>
<div class="t" style="left:10.18px;top:342px;font-size:13px;line-height:15px;letter-spacing:0.000px;color:#333;">7</div>
<div class="t" style="left:10.18px;top:362px;font-size:13px;line-height:15px;letter-spacing:0.000px;color:#333;">8</div>
<div class="t" style="left:10.18px;top:382px;font-size:13px;line-height:15px;letter-spacing:0.000px;color:#333;">9</div>
<div class="t" style="left:7.48px;top:402px;font-size:13px;line-height:15px;letter-spacing:-0.600px;color:#333;">10</div>
<div class="t" style="left:7.95px;top:422px;font-size:13px;line-height:15px;letter-spacing:-0.600px;color:#333;">11</div>
<div class="t" style="left:7.48px;top:442px;font-size:13px;line-height:15px;letter-spacing:-0.600px;color:#333;">12</div>
<div class="t" style="left:7.48px;top:462px;font-size:13px;line-height:15px;letter-spacing:-0.600px;color:#333;">13</div>
<div class="t" style="left:7.48px;top:482px;font-size:13px;line-height:15px;letter-spacing:-0.600px;color:#333;">14</div>
<div class="t" style="left:7.48px;top:502px;font-size:13px;line-height:15px;letter-spacing:-0.600px;color:#333;">15</div>
<div class="t" style="left:7.48px;top:522px;font-size:13px;line-height:15px;letter-spacing:-0.600px;color:#333;">16</div>
<div class="t" style="left:7.48px;top:542px;font-size:13px;line-height:15px;letter-spacing:-0.600px;color:#333;">17</div>
<div class="t" style="left:7.48px;top:562px;font-size:13px;line-height:15px;letter-spacing:-0.600px;color:#333;">18</div>
<div class="a" style="left:25px;top:217px;width:83px;height:23px;background:transparent;border:2px solid #217346"></div>
<div class="a" style="left:103px;top:235px;width:6px;height:5px;background:#217346;border-left:1px solid #fff;border-top:1px solid #fff"></div>
<div class="a" style="left:107px;top:220px;width:17px;height:17px;background:#e2e5ec;border:1px solid #a9aeb9;background:linear-gradient(#e5e8ef,#dfe2e9)"></div>
<svg class="a" style="left:112px;top:227px" width="7" height="4" viewBox="0 0 7 4"><path d="M0 0H7L3.500 4Z" fill="#606060"/></svg>
<div class="a" style="left:26px;top:238px;width:98px;height:67px;background:#fff;border:1px solid #000"></div>
<div class="a" style="left:27px;top:265px;width:95px;height:13px;background:#0078d7;"></div>
<div class="t" style="left:31.30px;top:240px;font-size:11px;line-height:12px;letter-spacing:-0.825px;color:#000;">Jan</div>
<div class="t" style="left:31.30px;top:253px;font-size:11px;line-height:12px;letter-spacing:-0.067px;color:#000;">Chen</div>
<div class="t" style="left:31.30px;top:266px;font-size:11px;line-height:12px;letter-spacing:0.362px;color:#fff;">Mateo</div>
<div class="t" style="left:31.30px;top:279px;font-size:11px;line-height:12px;letter-spacing:-0.233px;color:#000;">Paul</div>
<div class="t" style="left:31.30px;top:292px;font-size:11px;line-height:12px;letter-spacing:-0.060px;color:#000;">Sandra</div>
<div class="a" style="left:1063px;top:201px;width:15px;height:377px;background:#dadada;"></div>
<div class="a" style="left:1063px;top:201px;width:15px;height:16px;background:#fff;border:1px solid #ababab"></div>
<svg class="a" style="left:1067px;top:206px" width="7" height="4" viewBox="0 0 7 4"><path d="M0 4H7L3.500 0Z" fill="#777"/></svg>
<div class="a" style="left:1063px;top:216px;width:15px;height:294px;background:#fff;border:1px solid #ababab"></div>
<div class="a" style="left:1063px;top:563px;width:15px;height:15px;background:#fff;border:1px solid #ababab"></div>
<svg class="a" style="left:1067px;top:568px" width="7" height="4" viewBox="0 0 7 4"><path d="M0 0H7L3.500 4Z" fill="#777"/></svg>
<div class="a" style="left:1px;top:578px;width:1080px;height:27px;background:#e6e6e6;"></div>
<div class="a" style="left:1px;top:605px;width:1080px;height:1px;background:#c8c8c8;"></div>
<div class="a" style="left:101px;top:578px;width:32px;height:24px;background:#fff;border-left:1px solid #b4b4b4;border-right:1px solid #b4b4b4"></div>
<div class="a" style="left:102px;top:577px;width:30px;height:1px;background:#fff;"></div>
<div class="a" style="left:101px;top:600px;width:32px;height:2px;background:#217346;"></div>
<div class="t" style="left:113.70px;top:583px;font-size:13.5px;line-height:15px;letter-spacing:0.000px;color:#217346;font-weight:bold;">1</div>
<div class="t" style="left:144.30px;top:583px;font-size:13px;line-height:15px;letter-spacing:0.000px;color:#444;">2</div>
<div class="a" style="left:162px;top:581px;width:1px;height:20px;background:#8a8a8a;"></div>
<svg class="a" style="left:28px;top:587px" width="5" height="8" viewBox="0 0 5 8"><path d="M4.500 0V8L0 4Z" fill="#c4c4c4"/></svg>
<svg class="a" style="left:57px;top:587px" width="5" height="8" viewBox="0 0 5 8"><path d="M0 0V8L4.500 4Z" fill="#c4c4c4"/></svg>
<svg class="a" style="left:195px;top:582px" width="18" height="18" viewBox="0 0 18 18"><circle cx="8.700" cy="8.800" r="7.500" fill="none" stroke="#737373" stroke-width="1.200"/><path d="M4.700 8.800H12.700M8.700 4.800V12.800" stroke="#666" stroke-width="1.700"/></svg>
<div class="a" style="left:649px;top:587px;width:2px;height:2px;background:#b4b4b4;"></div>
<div class="a" style="left:649px;top:591px;width:2px;height:2px;background:#b4b4b4;"></div>
<div class="a" style="left:649px;top:595px;width:2px;height:2px;background:#b4b4b4;"></div>
<div class="a" style="left:666px;top:584px;width:394px;height:15px;background:#dadada;"></div>
<div class="a" style="left:666px;top:584px;width:16px;height:15px;background:#fff;border:1px solid #ababab"></div>
<svg class="a" style="left:671px;top:588px" width="5" height="8" viewBox="0 0 5 8"><path d="M4.500 0V8L0 4Z" fill="#666"/></svg>
<div class="a" style="left:681px;top:584px;width:333px;height:15px;background:#fff;border:1px solid #ababab"></div>
<div class="a" style="left:1045px;top:584px;width:15px;height:15px;background:#fff;border:1px solid #ababab"></div>
<svg class="a" style="left:1050px;top:588px" width="5" height="8" viewBox="0 0 5 8"><path d="M0 0V8L4.500 4Z" fill="#666"/></svg>
<div class="a" style="left:1px;top:606px;width:1080px;height:21px;background:#f1f1f1;"></div>
<div class="t" style="left:9.00px;top:609px;font-size:12px;line-height:14px;letter-spacing:-1.200px;color:#444;">Ready</div>
<div class="a" style="left:775px;top:606px;width:38px;height:21px;background:#c6c6c6;"></div>
<svg class="a" style="left:787px;top:609px" width="13" height="13" viewBox="0 0 13 13"><rect x="0" y="0" width="13" height="13" fill="#666"/><rect x="1" y="1" width="3" height="3" fill="#d4d4d4"/><rect x="1" y="5" width="3" height="3" fill="#d4d4d4"/><rect x="1" y="9" width="3" height="3" fill="#d4d4d4"/><rect x="5" y="1" width="3" height="3" fill="#d4d4d4"/><rect x="5" y="5" width="3" height="3" fill="#d4d4d4"/><rect x="5" y="9" width="3" height="3" fill="#d4d4d4"/><rect x="9" y="1" width="3" height="3" fill="#d4d4d4"/><rect x="9" y="5" width="3" height="3" fill="#d4d4d4"/><rect x="9" y="9" width="3" height="3" fill="#d4d4d4"/></svg>
<svg class="a" style="left:825px;top:609px" width="14" height="13" viewBox="0 0 14 13"><rect x=".5" y=".5" width="13" height="12" fill="#fff" stroke="#666"/><rect x="3.500" y="2.500" width="7" height="8" fill="none" stroke="#666"/><path d="M5 4.500H9M5 6.500H9M5 8.500H9" stroke="#666" stroke-width=".9"/></svg>
<svg class="a" style="left:863px;top:609px" width="14" height="13" viewBox="0 0 14 13"><rect x=".5" y=".5" width="13" height="12" fill="#fff" stroke="#666"/><path d="M4.500 .5V7M8.500 .5V7M.5 7.500H9" fill="none" stroke="#666"/></svg>
<div class="a" style="left:894px;top:615px;width:6px;height:2px;background:#555;"></div>
<div class="a" style="left:904px;top:615px;width:100px;height:1px;background:#a6a6a6;"></div>
<div class="a" style="left:952px;top:610px;width:4px;height:11px;background:#5a5a5a;"></div>
<svg class="a" style="left:1008px;top:612px" width="8" height="8" viewBox="0 0 8 8"><path d="M0 4H8M4 0V8" stroke="#555" stroke-width="2"/></svg>
<div class="t" style="left:1033.00px;top:608px;font-size:12px;line-height:14px;letter-spacing:-1.650px;color:#555;">100</div>
<div class="t" style="left:1052.30px;top:608px;font-size:12px;line-height:14px;letter-spacing:0.000px;color:#555;">%</div>
</body></html>
